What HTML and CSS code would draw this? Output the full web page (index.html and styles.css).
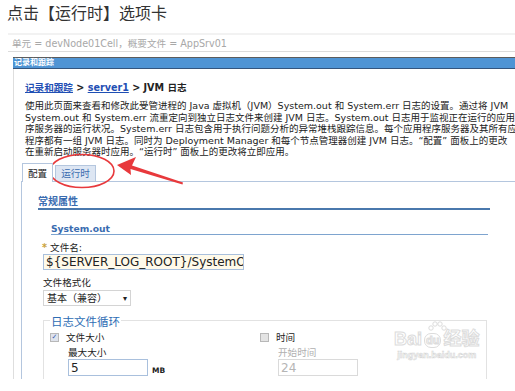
FILE: index.html
```html
<!DOCTYPE html>
<html lang="zh-CN">
<head>
    <meta charset="UTF-8">
    <title>JVM 日志</title>
    <link rel="stylesheet" href="styles.css">
</head>
<body>
    <h1 class="title">点击【运行时】选项卡</h1>

    <div class="shot">
        <div class="scope">单元 = devNode01Cell，概要文件 = AppSrv01</div>

        <div class="frame">
            <div class="bar">记录和跟踪</div>

            <div class="content">
                <div class="crumbs">
                    <a href="#">记录和跟踪</a> &gt; <a href="#">server1</a> &gt; JVM 日志
                </div>

                <div class="desc">
                    <div>使用此页面来查看和修改此受管进程的 Java 虚拟机（JVM）System.out 和 System.err 日志的设置。通过将 JVM</div>
                    <div>System.out 和 System.err 流重定向到独立日志文件来创建 JVM 日志。System.out 日志用于监视正在运行的应用</div>
                    <div>序服务器的运行状况。System.err 日志包含用于执行问题分析的异常堆栈跟踪信息。每个应用程序服务器及其所有应</div>
                    <div>程序都有一组 JVM 日志。同时为 Deployment Manager 和每个节点管理器创建 JVM 日志。“配置” 面板上的更改</div>
                    <div>在重新启动服务器时应用。“运行时” 面板上的更改将立即应用。</div>
                </div>

                <div class="tabs">
                    <span class="tab active">配置</span>
                    <span class="tab">运行时</span>
                </div>

                <div class="panel">
                    <h2 class="section">常规属性</h2>
                    <h3 class="subsection">System.out</h3>

                    <div class="field">
                        <div class="label"><span class="req">*</span> 文件名:</div>
                        <div class="text-input wide">${SERVER_LOG_ROOT}/SystemOut.log</div>
                    </div>

                    <div class="field">
                        <div class="label plain">文件格式化</div>
                        <div class="select">基本（兼容）<span class="caret">▾</span></div>
                    </div>

                    <fieldset class="rotate">
                        <legend>日志文件循环</legend>
                        <div class="rotate-cols">
                            <div class="opt">
                                <div class="check-row"><span class="box checked">✓</span>文件大小</div>
                                <div class="sub">
                                    <div class="sub-label">最大大小</div>
                                    <div class="unit-row"><div class="text-input small">5</div><span class="unit">MB</span></div>
                                </div>
                            </div>
                            <div class="opt">
                                <div class="check-row"><span class="box"></span>时间</div>
                                <div class="sub">
                                    <div class="sub-label muted">开始时间</div>
                                    <div class="text-input small disabled">24</div>
                                </div>
                            </div>
                        </div>
                        <div class="watermark">
                            <svg class="wm-paw" width="20" height="12" viewBox="0 0 20 12">
                                <circle cx="4" cy="8" r="2.2" fill="none" stroke="#dcdcdc"/>
                                <circle cx="8" cy="4" r="2.2" fill="none" stroke="#dcdcdc"/>
                                <circle cx="13" cy="4" r="2.2" fill="none" stroke="#dcdcdc"/>
                                <circle cx="17" cy="8" r="2.2" fill="none" stroke="#dcdcdc"/>
                            </svg>
                            <div class="wm-logo">Bai<span class="wm-du">du</span>经验</div>
                            <div class="wm-url">jingyan.baidu.com</div>
                        </div>
                    </fieldset>
                </div>
            </div>
        </div>
    </div>

    <!-- 红色圈和箭头 -->
    <svg class="callout" width="515" height="391" viewBox="0 0 515 391">
        <ellipse cx="82" cy="171" rx="32" ry="16.5" fill="none" stroke="#e8393c" stroke-width="1.6"/>
        <polygon points="117,165 136,157 132,165.5 183,182.5 182.5,184.5 130.5,169 131,175" fill="#e8393c"/>
    </svg>
</body>
</html>
```

FILE: styles.css
```css
body {
    margin: 0;
    background: #fff;
    font-family: "DejaVu Sans", "Noto Sans CJK SC", sans-serif;
    color: #222;
    overflow: hidden;
    position: relative;
}

.title {
    margin: 0;
    padding: 1px 0 0 7px;
    height: 32px;
    font-family: "Noto Sans CJK SC", sans-serif;
    font-size: 16px;
    font-weight: normal;
    line-height: 22px;
    color: #333;
}

.shot {
    margin-left: 8px;
    height: 344px;
    overflow: hidden;
    border-top: 2px solid #f2f2f2;
}

.scope {
    height: 16px;
    padding-left: 4px;
    font-size: 9.6px;
    line-height: 17px;
    color: #a8a8a8;
    border-bottom: 1px solid #dcdcdc;
}

.frame {
    margin: 5px 0 0 5px;
}

.bar {
    height: 10px;
    border-top: 1px solid #5c5c5c;
    border-bottom: 1px solid #34557d;
    background: #4f94d4;
    color: #fff;
    font-size: 8px;
    font-weight: bold;
    line-height: 10px;
    padding-left: 1px;
}

.content {
    border-left: 1px solid #dedede;
    padding: 13px 0 0 7px;
    height: 400px;
}

.crumbs {
    padding-left: 4px;
    font-size: 9.6px;
    font-weight: bold;
    line-height: 12px;
    white-space: nowrap;
}

.crumbs a {
    color: #1f4fb4;
}

.desc {
    margin-top: 6px;
    padding-left: 4px;
    font-size: 9.5px;
    line-height: 11.5px;
    white-space: nowrap;
}

.tabs {
    margin-top: 5px;
    display: flex;
    align-items: flex-end;
    gap: 2px;
    padding-left: 1px;
    height: 18px;
}

.tab {
    display: block;
    height: 15px;
    padding: 0 5px;
    border: 1px solid #b4c6de;
    border-bottom: none;
    background: #dde6f3;
    color: #3a6cb0;
    font-size: 9.6px;
    line-height: 16px;
}

.tab.active {
    height: 18px;
    background: #fff;
    color: #222;
    line-height: 20px;
    position: relative;
    z-index: 1;
    margin-bottom: -1px;
}

.panel {
    width: 520px;
    border-top: 1px solid #b4c6de;
    border-left: 1px solid #b4c6de;
    padding: 14px 0 0 16px;
    height: 300px;
}

.section {
    margin: 0;
    width: 452px;
    font-size: 10px;
    font-weight: bold;
    line-height: 12px;
    color: #3a6cb0;
    border-bottom: 2px solid #4a78ad;
}

.subsection {
    margin: 13px 0 0 13px;
    width: 437px;
    font-size: 9.2px;
    font-weight: bold;
    line-height: 11px;
    color: #3a6cb0;
    border-bottom: 1px solid #7ea4cf;
}

.field {
    margin-left: 5px;
}

.label {
    margin-top: 7px;
    font-size: 9.6px;
    line-height: 12px;
    margin-left: -1px;
}

.label.plain {
    margin-left: 0;
}

.req {
    color: #c9a23a;
    font-weight: bold;
}

.text-input {
    height: 14px;
    border: 1px solid #a9c0dd;
    background: #fffaea;
    font-size: 12px;
    line-height: 15px;
    padding-left: 2px;
    overflow: hidden;
    white-space: nowrap;
    color: #222;
}

.text-input.wide {
    width: 197px;
}

.select {
    display: flex;
    justify-content: space-between;
    align-items: center;
    width: 80px;
    height: 14px;
    border: 1px solid #d4d4d4;
    padding: 0 3px 0 3px;
    margin-top: 1px;
    font-family: "Noto Sans CJK SC", sans-serif;
    font-size: 10px;
    line-height: 14px;
}

.caret {
    font-size: 8px;
}

.rotate {
    margin: 8px 0 0 5px;
    width: 436px;
    padding: 0 0 0 6px;
    border: 1px solid #e2e2e2;
    position: relative;
    height: 80px;
}

.rotate legend {
    padding: 0 1px;
    font-family: "Noto Sans CJK SC", sans-serif;
    font-size: 11.5px;
    line-height: 14px;
    color: #2e6db4;
}

.rotate-cols {
    display: grid;
    grid-template-columns: 210px 1fr;
    padding-top: 4px;
}

.check-row {
    display: flex;
    align-items: center;
    font-size: 9.6px;
    line-height: 12px;
}

.box {
    width: 7px;
    height: 7px;
    border: 1px solid #b8b8b8;
    background: #e4e4e4;
    margin-right: 7px;
    font-size: 7px;
    line-height: 7px;
    text-align: center;
    color: #3a5fb0;
}

.box.checked {
    background: #dfe3ec;
}

.sub {
    margin-left: 18px;
    margin-top: 3px;
}

.sub-label {
    font-size: 9.6px;
    line-height: 12px;
}

.sub-label.muted {
    color: #b0b0b0;
}

.text-input.small {
    width: 76px;
    height: 15px;
    background: #fff;
    font-size: 12px;
    line-height: 16px;
}

.text-input.disabled {
    border-color: #dadada;
    color: #b5b5b5;
}

.unit-row {
    display: flex;
    align-items: flex-end;
    gap: 4px;
}

.unit {
    font-size: 7.5px;
    font-weight: bold;
    line-height: 10px;
}

.watermark {
    position: absolute;
    left: 350px;
    top: -8px;
    white-space: nowrap;
    text-align: center;
}

.wm-paw {
    display: block;
    margin: 0 auto -3px;
}

.wm-logo {
    font-family: "Liberation Sans", "Noto Sans CJK SC", sans-serif;
    font-size: 18px;
    font-weight: bold;
    line-height: 20px;
    color: #fff;
    -webkit-text-stroke: 1px #dcdcdc;
}

.wm-du {
    display: inline-block;
    font-size: 11px;
    line-height: 13px;
    border: 1px solid #dcdcdc;
    border-radius: 7px;
    padding: 0 1px;
    margin: 0 2px;
    vertical-align: 1px;
}

.wm-url {
    font-family: "Liberation Sans", sans-serif;
    font-size: 9px;
    font-weight: bold;
    line-height: 12px;
    color: #fff;
    -webkit-text-stroke: 0.6px #d6d6d6;
}

.callout {
    position: absolute;
    left: 0;
    top: 0;
    pointer-events: none;
}
```
